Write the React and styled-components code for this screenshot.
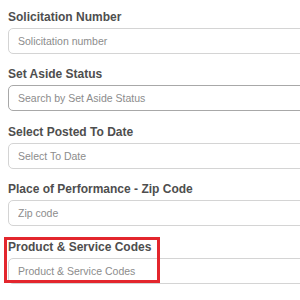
import React from "react";
import styled, { createGlobalStyle } from "styled-components";

const GlobalStyle = createGlobalStyle`
  html, body {
    margin: 0;
    padding: 0;
    background: #ffffff;
  }
  body {
    font-family: "Liberation Sans", Arial, sans-serif;
  }
`;

const FiltersStyled = styled.div`
  box-sizing: border-box;
  display: flex;
  flex-direction: column;
  gap: 13.5px;
  width: 300px;
  height: 300px;
  padding: 9.5px 0 0 8px;
  overflow: hidden;
`;

const Field = styled.div`
  position: relative;
  display: flex;
  flex-direction: column;
  gap: 4px;
`;

const Label = styled.label`
  font-size: 12px;
  line-height: 14px;
  font-weight: 700;
  color: #4e4e4e;
`;

const Input = styled.input`
  box-sizing: border-box;
  width: 310px;
  height: 26px;
  padding: 0 9px;
  border: 1px solid ${(p) => (p.$active ? "#a8a8a8" : "#d4d4d4")};
  border-radius: 5px;
  background: #ffffff;
  font-family: "Liberation Sans", Arial, sans-serif;
  font-size: 10.5px;
  color: #333;
  outline: none;
  &::placeholder {
    color: #8c8c8c;
  }
`;

const Highlight = styled.div`
  position: absolute;
  left: -4px;
  top: -3px;
  width: 156px;
  height: 46px;
  box-sizing: border-box;
  border: 3px solid #e3262d;
  pointer-events: none;
`;

const fields = [
  { label: "Solicitation Number", placeholder: "Solicitation number" },
  { label: "Set Aside Status", placeholder: "Search by Set Aside Status", active: true },
  { label: "Select Posted To Date", placeholder: "Select To Date" },
  { label: "Place of Performance - Zip Code", placeholder: "Zip code" },
  { label: "Product & Service Codes", placeholder: "Product & Service Codes", highlight: true },
];

export default function App() {
  return (
    <>
      <GlobalStyle />
      <FiltersStyled>
        {fields.map((item) => (
          <Field key={item.label}>
            <Label>{item.label}</Label>
            <Input placeholder={item.placeholder} $active={item.active} readOnly />
            {item.highlight && <Highlight />}
          </Field>
        ))}
      </FiltersStyled>
    </>
  );
}
